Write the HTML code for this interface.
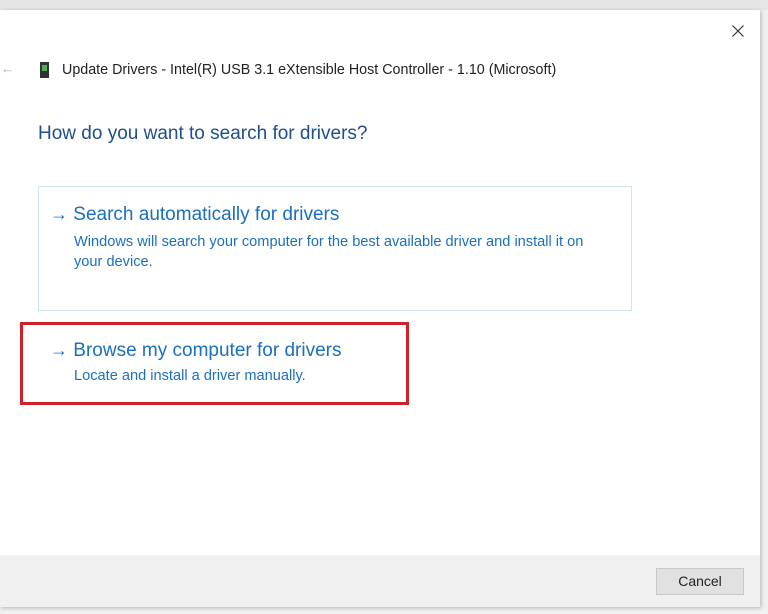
<!DOCTYPE html>
<html><head><style>
body{margin:0;width:768px;height:614px;background:#f0f0f0;position:relative;overflow:hidden;font-family:"Liberation Sans",sans-serif}
.dlg{position:absolute;left:0;top:10px;width:760px;height:597px;background:#fff;box-shadow:1px 1px 4px rgba(0,0,0,.25)}
.foot{position:absolute;left:0;top:545px;width:760px;height:52px;background:#f0f0f0}
.t{position:absolute;white-space:nowrap}
.btn{position:absolute;left:656px;top:558px;width:88px;height:27px;background:#e1e1e1;border:1px solid #c8c8c8;box-sizing:border-box;text-align:center;line-height:25px;font-size:14px;color:#222}
.box{position:absolute;left:38px;top:176px;width:594px;height:125px;border:1px solid #cde4ec;box-sizing:border-box}
.red{position:absolute;left:20px;top:312px;width:389px;height:83px;border:3px solid #d0212b;box-sizing:border-box}
</style></head><body>
<div style="position:absolute;left:0;top:0;width:768px;height:10px;background:#e6e6e6"></div>
<div class="dlg">
<svg style="position:absolute;left:732px;top:15px" width="12" height="12"><path d="M0.5 0.5L11.5 11.5M11.5 0.5L0.5 11.5" stroke="#333" stroke-width="1.2"/></svg>
<div class="t" style="left:1px;top:51px;font-size:13px;color:#aaa">←</div>
<div style="position:absolute;left:40px;top:52px;width:9px;height:16px;background:#333"><div style="position:absolute;left:2px;top:3px;width:5px;height:6px;background:#4caf50"></div></div>
<div class="t" style="left:62px;top:52px;font-size:14.3px;color:#222">Update Drivers - Intel(R) USB 3.1 eXtensible Host Controller - 1.10 (Microsoft)</div>
<div class="t" style="left:38px;top:113px;font-size:19px;color:#1f4e8c">How do you want to search for drivers?</div>
<div class="box"></div>
<div class="t" style="left:50px;top:194px;font-size:19px;color:#1a6fbf"><span style="font-size:18px">→</span> Search automatically for drivers</div>
<div class="t" style="left:74px;top:222px;font-size:14.6px;color:#1a6fbf;line-height:20px">Windows will search your computer for the best available driver and install it on<br>your device.</div>
<div class="red"></div>
<div class="t" style="left:50px;top:330px;font-size:19px;color:#1a6fbf"><span style="font-size:18px">→</span> Browse my computer for drivers</div>
<div class="t" style="left:74px;top:358px;font-size:14.6px;color:#1a6fbf">Locate and install a driver manually.</div>
<div class="foot"></div>
<div class="btn">Cancel</div>
</div>
</body></html>
